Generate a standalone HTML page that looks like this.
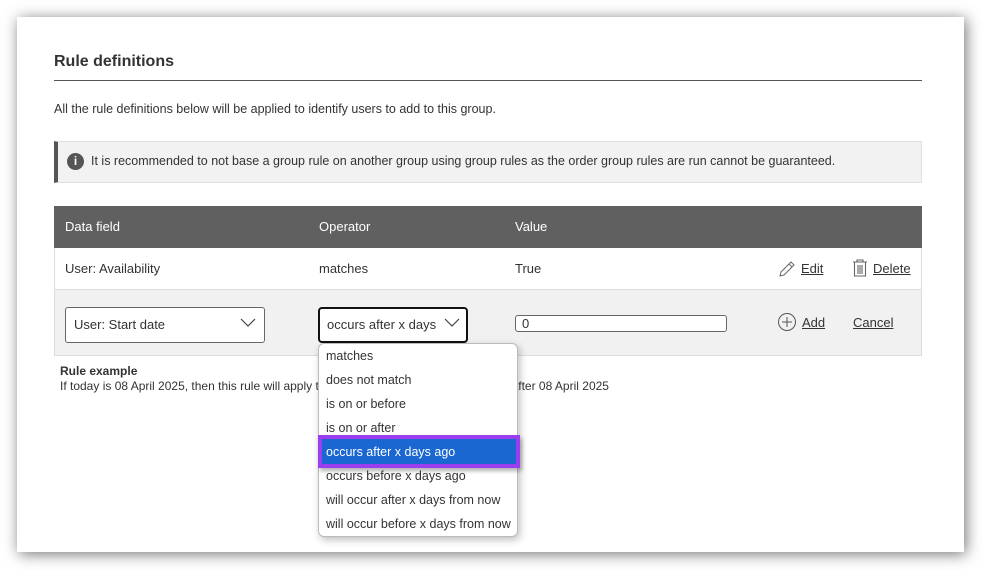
<!DOCTYPE html>
<html><head><style>
*{box-sizing:border-box;margin:0;padding:0}
body{width:982px;height:570px;background:#fff;position:relative;overflow:hidden;font-family:"Liberation Sans",sans-serif;color:#333;font-size:13px}
.card{position:absolute;left:17px;top:17px;width:947px;height:535px;background:#fff;box-shadow:2px 2px 14px rgba(0,0,0,.55)}
.a{position:absolute;white-space:nowrap}
.it{position:absolute;left:326px;font-size:12.5px;line-height:16px;white-space:nowrap}
u{text-decoration:underline}
</style></head><body>
<div class="card"></div>
<div class="a" style="left:54px;top:53px;font-size:16px;font-weight:bold;color:#333">Rule definitions</div>
<div class="a" style="left:54px;top:80px;width:868px;height:1px;background:#555"></div>
<div class="a" style="left:54px;top:102px;font-size:12.5px">All the rule definitions below will be applied to identify users to add to this group.</div>
<div class="a" style="left:54px;top:141px;width:868px;height:42px;background:#f2f2f2;border:1px solid #e0e0e0;border-left:4px solid #555"></div>
<div class="a" style="left:67px;top:153px;width:17px;height:17px;border-radius:50%;background:#555;color:#fff;font-size:12px;font-weight:bold;text-align:center;line-height:17px">i</div>
<div class="a" style="left:91px;top:154px;font-size:12.5px">It is recommended to not base a group rule on another group using group rules as the order group rules are run cannot be guaranteed.</div>
<div class="a" style="left:54px;top:206px;width:868px;height:42px;background:#606060"></div>
<div class="a" style="left:65px;top:219px;color:#fff;font-size:13px">Data field</div>
<div class="a" style="left:319px;top:219px;color:#fff;font-size:13px">Operator</div>
<div class="a" style="left:515px;top:219px;color:#fff;font-size:13px">Value</div>
<div class="a" style="left:54px;top:248px;width:868px;height:42px;background:#fff;border:1px solid #ddd;border-top:none"></div>
<div class="a" style="left:65px;top:261px">User: Availability</div>
<div class="a" style="left:319px;top:261px">matches</div>
<div class="a" style="left:515px;top:261px">True</div>
<svg class="a" style="left:777px;top:259px" width="20" height="20" viewBox="0 0 20 20"><path d="M3 17 L4 13 L14 3 L17 6 L7 16 Z M12 5 L15 8" fill="none" stroke="#666" stroke-width="1"/></svg>
<div class="a" style="left:801px;top:261px"><u>Edit</u></div>
<svg class="a" style="left:851px;top:258px" width="18" height="20" viewBox="0 0 18 20"><path d="M2 4H16M6 4V2H12V4M3.5 4V18H14.5V4M7 7V16M9 7V16M11 7V16" fill="none" stroke="#666" stroke-width="1.1"/></svg>
<div class="a" style="left:873px;top:261px"><u>Delete</u></div>
<div class="a" style="left:54px;top:290px;width:868px;height:66px;background:#f1f1f1;border:1px solid #ddd;border-top:none"></div>
<div class="a" style="left:65px;top:307px;width:200px;height:36px;background:#fff;border:1px solid #666;border-radius:3px"></div>
<div class="a" style="left:74px;top:317px">User: Start date</div>
<svg class="a" style="left:240px;top:318px" width="16" height="10"><path d="M1 1L8 8L15 1" fill="none" stroke="#444" stroke-width="1.2"/></svg>
<div class="a" style="left:318px;top:307px;width:150px;height:36px;background:#fff;border:2px solid #111;border-radius:4px;overflow:hidden"></div>
<div class="a" style="left:327px;top:317px;width:111px;overflow:hidden">occurs after x days ago</div>
<svg class="a" style="left:444px;top:318px" width="16" height="10"><path d="M1 1L8 8L15 1" fill="none" stroke="#444" stroke-width="1.2"/></svg>
<div class="a" style="left:515px;top:315px;width:212px;height:17px;background:#fff;border:1px solid #666;border-radius:3px;padding-left:6px;line-height:15px">0</div>
<svg class="a" style="left:777px;top:312px" width="20" height="20"><circle cx="10" cy="10" r="8.5" fill="none" stroke="#555"/><path d="M10 5V15M5 10H15" stroke="#555"/></svg>
<div class="a" style="left:802px;top:315px"><u>Add</u></div>
<div class="a" style="left:853px;top:315px"><u>Cancel</u></div>
<div class="a" style="left:60px;top:364px;font-weight:bold;font-size:12px">Rule example</div>
<div class="a" style="left:60px;top:379px;font-size:12px">If today is 08 April 2025, then this rule will apply to users with a start date that occurs after 08 April 2025</div>
<div class="a" style="left:318px;top:343px;width:200px;height:194px;background:#fff;border:1px solid #bbb;border-radius:6px;box-shadow:2px 3px 8px rgba(0,0,0,.25)"></div>
<div class="it" style="top:348px">matches</div>
<div class="it" style="top:372px">does not match</div>
<div class="it" style="top:396px">is on or before</div>
<div class="it" style="top:420px">is on or after</div>
<div class="it" style="top:468px">occurs before x days ago</div>
<div class="it" style="top:492px">will occur after x days from now</div>
<div class="it" style="top:516px">will occur before x days from now</div>
<div class="a" style="left:318px;top:435px;width:202px;height:33px;border:4px solid #9b3ef0;background:#1a67d2;box-shadow:2px 3px 4px rgba(0,0,0,.3)"></div>
<div class="it" style="top:444px;color:#fff">occurs after x days ago</div>
</body></html>
